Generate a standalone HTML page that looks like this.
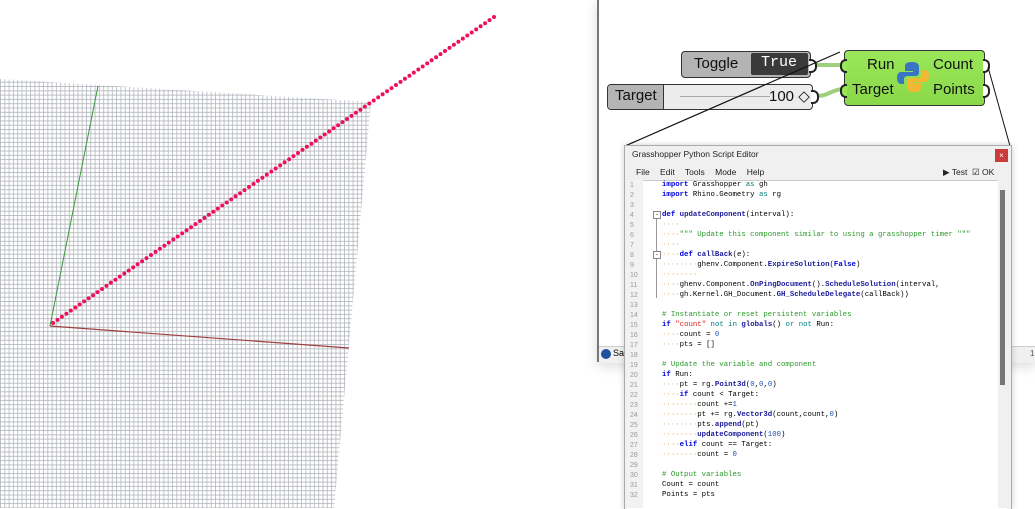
<!DOCTYPE html>
<html><head><meta charset="utf-8"><style>
body{margin:0;width:1035px;height:508px;overflow:hidden;background:#fff;position:relative;font-family:"Liberation Sans",sans-serif}
.a{position:absolute}
.code{position:absolute;left:662px;font-family:"Liberation Mono",monospace;font-size:7.35px;line-height:10px;white-space:pre;color:#000}
.ln{position:absolute;left:630px;font-family:"Liberation Sans",sans-serif;font-size:7px;color:#999;line-height:10px}
.k{color:#0000e0;font-weight:bold}.g{color:#2a9a2a}.t{color:#00807f}.f{color:#1a1a99;font-weight:bold}.d{color:#e0a060}.s{color:#e02020}.n{color:#2050b0}
</style></head><body>
<svg class="a" style="left:0;top:0" width="600" height="508">
<defs><pattern id="p" width="4.3" height="4.3" patternUnits="userSpaceOnUse"><path d="M0 0.5H4.3M0.5 0V4.3" stroke="#b2b6be" stroke-width="0.8" fill="none"/></pattern></defs>
<polygon points="0,79 371,102 334,508 0,508" fill="url(#p)"/>
<line x1="50" y1="326" x2="98" y2="86" stroke="#3a9a3a" stroke-width="1"/>
<line x1="50" y1="326" x2="349" y2="348" stroke="#a04040" stroke-width="1.2"/>
<g fill="#f0105a" id="dots"></g>
</svg>
<script>
var g=document.getElementById('dots'),s='';
for(var i=0;i<100;i++){var x=53+i*(441/99),y=323-i*(306/99);s+='<circle cx="'+x.toFixed(1)+'" cy="'+y.toFixed(1)+'" r="2"/>';}
g.innerHTML=s;
</script>
<div class="a" style="left:597px;top:0;width:438px;height:362px;border-left:2px solid #777;background:#fff;box-shadow:0 4px 12px rgba(0,0,0,0.15)"></div>
<div class="a" style="left:599px;top:346px;width:436px;height:16px;background:#f0f0f0;border-top:1px solid #ccc"></div>
<div class="a" style="left:601px;top:349px;width:10px;height:10px;border-radius:50%;background:#2050a0"></div>
<div class="a" style="left:613px;top:348px;font-size:9px">Save</div>
<div class="a" style="left:1030px;top:349px;font-size:8px;color:#555">1</div>
<svg class="a" style="left:0;top:0" width="1035" height="508">
<path d="M815 65 C830 65 830 65 843 65" stroke="#9ed07a" stroke-width="4" fill="none"/>
<path d="M815 96 C830 96 830 90 843 89" stroke="#9ed07a" stroke-width="4" fill="none"/>
</svg>
<div class="a" style="left:681px;top:51px;width:128px;height:25px;background:#b4b4b4;border:1px solid #333;border-radius:4px"></div>
<div class="a" style="left:694px;top:55px;font-size:15px;color:#111">Toggle</div>
<div class="a" style="left:751px;top:53px;width:57px;height:22px;background:#3a3a3a;border-radius:2px"></div>
<div class="a" style="left:761px;top:54px;font-size:15px;color:#fff;font-family:'Liberation Mono',monospace">True</div>
<div class="a" style="left:809px;top:59px;width:6px;height:10px;border:2px solid #222;border-left:none;border-radius:0 6px 6px 0;background:#fff"></div>
<div class="a" style="left:607px;top:84px;width:204px;height:24px;background:#ececec;border:1px solid #333;border-radius:4px;overflow:hidden"><div style="width:55px;height:24px;background:#b4b4b4;border-right:1px solid #333"></div></div>
<div class="a" style="left:615px;top:87px;font-size:15px;color:#111">Target</div>
<div class="a" style="left:680px;top:96px;width:90px;border-top:1px solid #aaa"></div>
<div class="a" style="left:769px;top:87px;font-size:15px;color:#111">100 ◇</div>
<div class="a" style="left:811px;top:90px;width:6px;height:10px;border:2px solid #222;border-left:none;border-radius:0 6px 6px 0;background:#fff"></div>
<div class="a" style="left:844px;top:50px;width:139px;height:54px;background:linear-gradient(#9ae85a,#8ad84a);border:1px solid #333;border-radius:4px"></div>
<div class="a" style="left:840px;top:59px;width:5px;height:10px;border:2px solid #222;border-right:none;border-radius:6px 0 0 6px;background:#9ae85a"></div>
<div class="a" style="left:840px;top:84px;width:5px;height:10px;border:2px solid #222;border-right:none;border-radius:6px 0 0 6px;background:#9ae85a"></div>
<div class="a" style="left:983px;top:59px;width:5px;height:10px;border:2px solid #222;border-left:none;border-radius:0 6px 6px 0;background:#fff"></div>
<div class="a" style="left:983px;top:84px;width:5px;height:10px;border:2px solid #222;border-left:none;border-radius:0 6px 6px 0;background:#fff"></div>
<div class="a" style="left:867px;top:56px;font-size:15px;color:#111">Run</div>
<div class="a" style="left:852px;top:81px;font-size:15px;color:#111">Target</div>
<div class="a" style="left:933px;top:56px;font-size:15px;color:#111">Count</div>
<div class="a" style="left:933px;top:81px;font-size:15px;color:#111">Points</div>
<svg class="a" style="left:897px;top:61px" width="32" height="32" viewBox="0 0 32 32">
<path d="M15 1C8 1 8 4 8 6V10H16V11H4C1 11 0 14 0 17C0 21 2 23 4 23H7V18C7 16 9 15 11 15H19C21 15 22 13 22 12V6C22 3 20 1 15 1Z" fill="#3a74c4"/>
<path d="M17 31C24 31 24 28 24 26V22H16V21H28C31 21 32 18 32 15C32 11 30 9 28 9H25V14C25 16 23 17 21 17H13C11 17 10 19 10 20V26C10 29 12 31 17 31Z" fill="#f2b832"/>
</svg>
<svg class="a" style="left:0;top:0" width="1035" height="508">
<line x1="625" y1="146" x2="840" y2="52" stroke="#111" stroke-width="1.2"/>
<line x1="988" y1="67" x2="1010" y2="146" stroke="#111" stroke-width="1"/>
</svg>
<div class="a" style="left:624px;top:145px;width:386px;height:363px;background:#f0f0f0;border:1px solid #aaa;border-bottom:none;box-shadow:0 0 6px rgba(0,0,0,0.2)"></div>
<div class="a" style="left:632px;top:149px;font-size:8.5px;color:#222">Grasshopper Python Script Editor</div>
<div class="a" style="left:995px;top:149px;width:13px;height:13px;background:#c83c3c;color:#fff;font-size:8px;text-align:center;line-height:13px">×</div>
<div class="a" style="left:636px;top:167px;font-size:8.5px;color:#222;word-spacing:8px">File Edit Tools Mode Help</div>
<div class="a" style="left:943px;top:167px;font-size:8.5px;color:#222">▶ Test &nbsp;☑ OK</div>
<div class="a" style="left:627px;top:180px;width:380px;height:328px;background:#fff;border-top:1px solid #ccc"></div>
<div class="a" style="left:627px;top:180px;width:16px;height:328px;background:#f2f2f2"></div>
<div class="a" style="left:998px;top:180px;width:9px;height:328px;background:#f0f0f0"></div>
<div class="a" style="left:1000px;top:190px;width:5px;height:195px;background:#777"></div>
<div class="a" style="left:656px;top:215px;height:83px;border-left:1px solid #999"></div>
<div class="a" style="left:653px;top:211px;width:6px;height:6px;border:1px solid #888;background:#fff;font-size:6px;line-height:6px;text-align:center">-</div>
<div class="a" style="left:653px;top:251px;width:6px;height:6px;border:1px solid #888;background:#fff;font-size:6px;line-height:6px;text-align:center">-</div>
<div class="ln" style="top:181px">1<br>2<br>3<br>4<br>5<br>6<br>7<br>8<br>9<br>10<br>11<br>12<br>13<br>14<br>15<br>16<br>17<br>18<br>19<br>20<br>21<br>22<br>23<br>24<br>25<br>26<br>27<br>28<br>29<br>30<br>31<br>32</div>
<div class="code" style="top:180px"><span class="k">import</span> Grasshopper <span class="t">as</span> gh
<span class="k">import</span> Rhino.Geometry <span class="t">as</span> rg

<span class="k">def</span> <span class="f">updateComponent</span>(interval):
<span class="d">····</span>
<span class="d">····</span><span class="g">""" Update this component similar to using a grasshopper timer """</span>
<span class="d">····</span>
<span class="d">····</span><span class="k">def</span> <span class="f">callBack</span>(e):
<span class="d">········</span>ghenv.Component.<span class="f">ExpireSolution</span>(<span class="k">False</span>)
<span class="d">········</span>
<span class="d">····</span>ghenv.Component.<span class="f">OnPingDocument</span>().<span class="f">ScheduleSolution</span>(interval,
<span class="d">····</span>gh.Kernel.GH_Document.<span class="f">GH_ScheduleDelegate</span>(callBack))

<span class="g"># Instantiate or reset persistent variables</span>
<span class="k">if</span> <span class="s">"count"</span> <span class="t">not in</span> <span class="f">globals</span>() <span class="t">or not</span> Run:
<span class="d">····</span>count = <span class="n">0</span>
<span class="d">····</span>pts = []

<span class="g"># Update the variable and component</span>
<span class="k">if</span> Run:
<span class="d">····</span>pt = rg.<span class="f">Point3d</span>(<span class="n">0</span>,<span class="n">0</span>,<span class="n">0</span>)
<span class="d">····</span><span class="k">if</span> count &lt; Target:
<span class="d">········</span>count +=<span class="n">1</span>
<span class="d">········</span>pt += rg.<span class="f">Vector3d</span>(count,count,<span class="n">0</span>)
<span class="d">········</span>pts.<span class="f">append</span>(pt)
<span class="d">········</span><span class="f">updateComponent</span>(<span class="n">100</span>)
<span class="d">····</span><span class="k">elif</span> count == Target:
<span class="d">········</span>count = <span class="n">0</span>

<span class="g"># Output variables</span>
Count = count
Points = pts</div>
</body></html>
